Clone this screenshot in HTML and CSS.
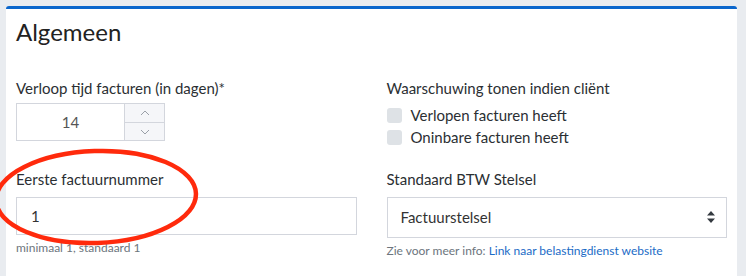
FILE: index.html
```html
<!DOCTYPE html>
<html lang="nl">
<head>
    <meta charset="UTF-8">
    <meta name="viewport" content="width=device-width, initial-scale=1.0">
    <title>Algemeen</title>
    <link rel="stylesheet" href="styles.css">
</head>
<body>
    <div class="card">
        <h2>Algemeen</h2>

        <div class="form-row">
            <div class="form-col">
                <div class="form-group">
                    <label>Verloop tijd facturen (in dagen)*</label>
                    <div class="number-input">
                        <div class="number-value">14</div>
                        <div class="spinner">
                            <span class="spin-btn">
                                <svg width="10" height="6" viewBox="0 0 10 6"><path d="M1 5 L5 1 L9 5" fill="none" stroke="#9aa0a8" stroke-width="1"/></svg>
                            </span>
                            <span class="spin-btn">
                                <svg width="10" height="6" viewBox="0 0 10 6"><path d="M1 1 L5 5 L9 1" fill="none" stroke="#9aa0a8" stroke-width="1"/></svg>
                            </span>
                        </div>
                    </div>
                </div>
            </div>
            <div class="form-col">
                <div class="form-group">
                    <label>Waarschuwing tonen indien cliënt</label>
                    <div class="check"><span class="check-box"></span>Verlopen facturen heeft</div>
                    <div class="check"><span class="check-box"></span>Oninbare facturen heeft</div>
                </div>
            </div>
        </div>

        <div class="form-row">
            <div class="form-col">
                <div class="form-group">
                    <label>Eerste factuurnummer</label>
                    <div class="text-input">1</div>
                    <small class="help">minimaal 1, standaard 1</small>
                </div>
            </div>
            <div class="form-col">
                <div class="form-group">
                    <label>Standaard BTW Stelsel</label>
                    <div class="select">
                        <span>Factuurstelsel</span>
                        <svg width="10" height="14" viewBox="0 0 10 14"><path d="M5 1 L9 5.5 L1 5.5 Z M5 13 L9 8.5 L1 8.5 Z" fill="#343a40"/></svg>
                    </div>
                    <small class="help help-right">Zie voor meer info: <a href="#">Link naar belastingdienst website</a></small>
                </div>
            </div>
        </div>
    </div>

    <svg class="annotation" width="220" height="110" viewBox="0 0 220 110">
        <ellipse cx="104" cy="52" rx="100" ry="46" transform="rotate(-2 104 52)" fill="none" stroke="#ff2a0c" stroke-width="4.5"/>
    </svg>
</body>
</html>
```

FILE: styles.css
```css
* {
    margin: 0;
    padding: 0;
    box-sizing: border-box;
}

body {
    font-family: Lato, 'Liberation Sans', sans-serif;
    font-size: 15px;
    line-height: 1.5;
    color: #2b2f33;
    background-color: #e9ecf0;
    overflow: hidden;
}

.card {
    margin: 6px 9px 0 6px;
    height: 280px;
    background-color: white;
    border-top: 3px solid #0a66cc;
    border-radius: 3px 3px 0 0;
    padding: 9px 10px 8px;
}

h2 {
    font-size: 24px;
    font-weight: 400;
    line-height: 1.2;
    color: #222;
    margin-bottom: 30px;
}

.form-row {
    display: flex;
    margin: 0 -15px;
}

.form-col {
    flex: 1;
    padding: 0 15px;
}

.form-group {
    margin-bottom: 20px;
}

label {
    display: block;
    margin-bottom: 4px;
}

.number-input {
    display: flex;
    width: 149px;
    height: 38px;
    border: 1px solid #d3d6dd;
}

.number-value {
    flex: 1;
    display: flex;
    align-items: center;
    justify-content: center;
    color: #555;
}

.spinner {
    width: 40px;
    display: flex;
    flex-direction: column;
    border-left: 1px solid #d3d6dd;
    background-color: #f5f6f9;
}

.spin-btn {
    flex: 1;
    display: flex;
    align-items: center;
    justify-content: center;
}

.spin-btn + .spin-btn {
    border-top: 1px solid #d3d6dd;
}

.check {
    display: flex;
    align-items: center;
    height: 22px;
}

.check:first-of-type {
    margin-top: 5px;
}

.check-box {
    width: 15px;
    height: 15px;
    border-radius: 3px;
    background-color: #dee2e6;
    margin-right: 9px;
}

.text-input {
    height: 38px;
    margin-top: 6px;
    border: 1px solid #d3d6dd;
    padding: 0 14px;
    display: flex;
    align-items: center;
    color: #333;
}

.select {
    height: 41px;
    margin-top: 6px;
    border: 1px solid #d3d6dd;
    padding: 0 10px 0 13px;
    display: flex;
    align-items: center;
    justify-content: space-between;
    color: #333;
}

.help {
    display: block;
    font-size: 12px;
    line-height: 18px;
    margin-top: 4px;
    color: #6c757d;
}

.help a {
    color: #1a6bc6;
    text-decoration: none;
}

.annotation {
    position: absolute;
    left: -8px;
    top: 145px;
}
```
